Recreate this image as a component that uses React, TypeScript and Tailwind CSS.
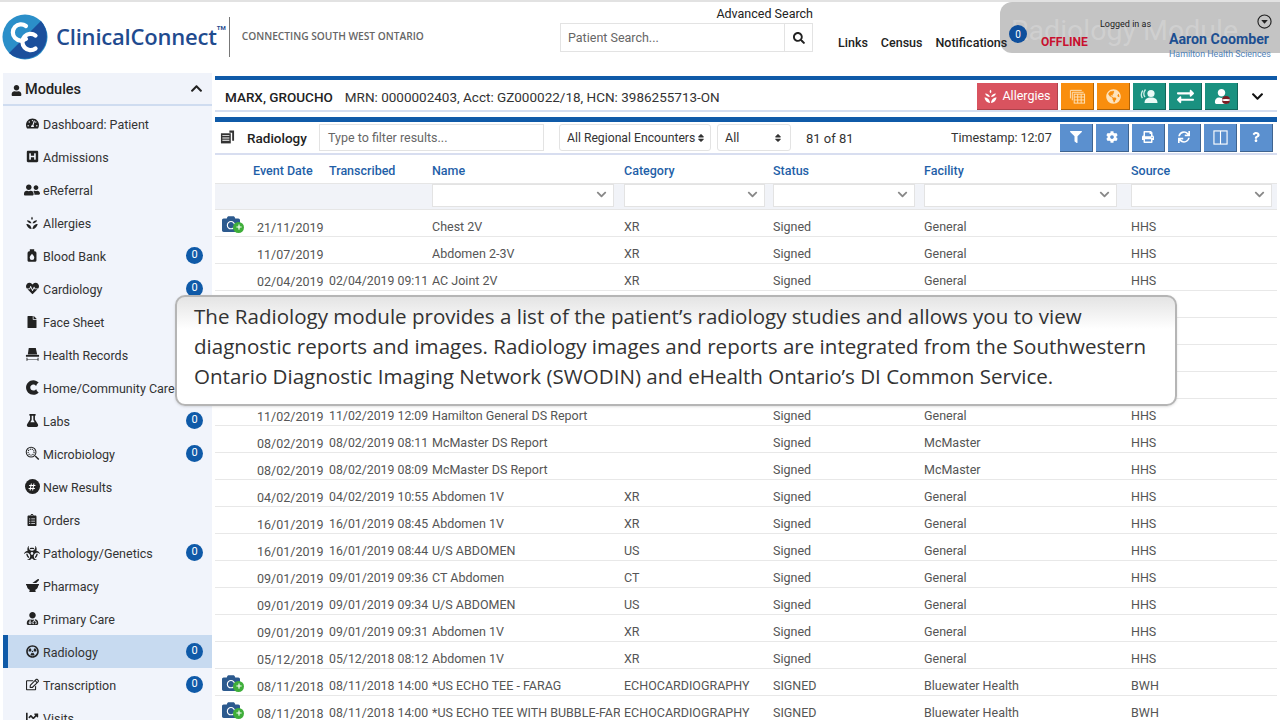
import type { ReactNode } from 'react'
import {
  FaCamera,
  FaChartLine,
  FaChevronDown,
  FaChevronUp,
  FaClipboardList,
  FaCog,
  FaCuttlefish,
  FaExchangeAlt,
  FaFile,
  FaFilter,
  FaFlask,
  FaGlobeAmericas,
  FaHSquare,
  FaHashtag,
  FaHeartbeat,
  FaMortarPestle,
  FaPlus,
  FaPrint,
  FaQuestion,
  FaRadiationAlt,
  FaRegEdit,
  FaSearch,
  FaSort,
  FaSync,
  FaTachometerAlt,
  FaUser,
  FaUserFriends,
  FaUserMd,
  FaBiohazard,
} from 'react-icons/fa'

function AllergyIcon({ className }: { className?: string }) {
  return (
    <svg viewBox="0 0 16 16" fill="currentColor" className={className ?? 'h-[14px] w-[14px]'}>
      <path d="M8 .8c1.2 1 1.2 2.7 0 3.7C6.8 3.5 6.8 1.8 8 .8Z" />
      <path d="M2.2 4.8c2.6 0 4.6 1.3 5.2 3.6C4.9 8.4 3 7.2 2.2 4.8Z" />
      <path d="M13.8 4.8c-2.6 0-4.6 1.3-5.2 3.6 2.5 0 4.4-1.2 5.2-3.6Z" />
      <path d="M1.5 9c3 0 5.4 1.6 6 5.8C4.5 14.6 2.3 12.5 1.5 9Z" />
      <path d="M14.5 9c-3 0-5.4 1.6-6 5.8 3-.2 5.2-2.3 6-5.8Z" />
    </svg>
  )
}

function BloodBagIcon() {
  return (
    <svg viewBox="0 0 16 16" className="h-[15px] w-[14px]" fill="currentColor">
      <path d="M5.5.8h5v2.4h.6a2 2 0 0 1 2 2v8.6a1.2 1.2 0 0 1-1.2 1.2H4.1a1.2 1.2 0 0 1-1.2-1.2V5.2a2 2 0 0 1 2-2h.6Z" />
      <path d="M8 6c1.6 2 2.6 3.1 2.6 4.5a2.6 2.6 0 0 1-5.2 0C5.4 9.1 6.4 8 8 6Z" fill="#f1f4fb" />
    </svg>
  )
}

function RecordsIcon() {
  return (
    <svg viewBox="0 0 16 16" className="h-[15px] w-[15px]" fill="currentColor">
      <path d="M4 1h7.5l1.5 7H3Z" />
      <path d="M1 8.4h14v2H1Z" />
      <path d="M1.6 11.4h1v3.2h-1ZM13.4 11.4h1v3.2h-1ZM1.6 13.2h12.8v.7H1.6Z" />
    </svg>
  )
}

function MicrobeIcon() {
  return (
    <svg viewBox="0 0 16 16" className="h-[15px] w-[15px]" fill="currentColor">
      <circle cx="6.5" cy="6.5" r="5.2" fill="none" stroke="currentColor" strokeWidth="1.1" />
      <circle cx="6.5" cy="6.5" r="3.2" fill="none" stroke="currentColor" strokeWidth="1.2" strokeDasharray="1.2 1" />
      <path d="m10.4 11.2 1-1 3.8 3.7-1.1 1.1Z" />
    </svg>
  )
}

function StackIcon() {
  return (
    <svg viewBox="0 0 16 16" className="h-[15px] w-[15px] text-[#333]" fill="currentColor">
      <path d="M10 .5h5v11h-2V3h-3Z" />
      <path d="M1 3.5h10.5v10.8H1Z" />
      <path d="M2.5 5.5H10v1H2.5ZM2.5 8H10v1H2.5ZM2.5 10.5H10v1H2.5Z" fill="#fff" />
    </svg>
  )
}

function LayeredTableIcon() {
  return (
    <svg viewBox="0 0 18 18" className="h-[17px] w-[17px]" fill="none" stroke="#fde3bd" strokeWidth="1">
      <path d="M1.5 11V2.5h12" />
      <path d="M3.5 13V4.5h12" />
      <rect x="5.5" y="6.5" width="11" height="9.5" />
      <path d="M5.5 9.5h11M5.5 12.7h11M9.2 6.5V16M12.9 6.5V16" />
    </svg>
  )
}

function UserEchoIcon() {
  return (
    <svg viewBox="0 0 18 18" className="h-[18px] w-[18px]" fill="#eafaf6">
      <circle cx="11" cy="6.5" r="3.6" />
      <path d="M4.5 16c0-4 2.6-5.6 6.5-5.6s6.5 1.6 6.5 5.6Z" />
      <path d="M5.5 2.5C3.5 5 3.5 8 5 10M2.8 3.5C1 6 1 9 2.4 11.2" fill="none" stroke="#cdeee6" strokeWidth="1.3" />
    </svg>
  )
}

function ColumnsIcon() {
  return (
    <svg viewBox="0 0 16 16" className="h-[15px] w-[15px]" fill="none" stroke="#fff" strokeWidth="1.2">
      <rect x="1" y="1" width="14" height="14" />
      <path d="M8 1v14" />
    </svg>
  )
}

type Module = { name: string; icon: ReactNode; badge?: boolean; active?: boolean }

const modules: Module[] = [
  { name: 'Dashboard: Patient', icon: <FaTachometerAlt /> },
  { name: 'Admissions', icon: <FaHSquare /> },
  { name: 'eReferral', icon: <FaUserFriends className="text-[16px]" /> },
  { name: 'Allergies', icon: <AllergyIcon /> },
  { name: 'Blood Bank', icon: <BloodBagIcon />, badge: true },
  { name: 'Cardiology', icon: <FaHeartbeat />, badge: true },
  { name: 'Face Sheet', icon: <FaFile className="text-[12px]" /> },
  { name: 'Health Records', icon: <RecordsIcon /> },
  { name: 'Home/Community Care', icon: <FaCuttlefish className="text-[15px]" /> },
  { name: 'Labs', icon: <FaFlask />, badge: true },
  { name: 'Microbiology', icon: <MicrobeIcon />, badge: true },
  {
    name: 'New Results',
    icon: (
      <span className="flex h-[15px] w-[15px] items-center justify-center rounded-full bg-[#222] text-[8px] text-white">
        <FaHashtag />
      </span>
    ),
  },
  { name: 'Orders', icon: <FaClipboardList className="text-[12px]" /> },
  { name: 'Pathology/Genetics', icon: <FaBiohazard className="text-[16px]" />, badge: true },
  { name: 'Pharmacy', icon: <FaMortarPestle /> },
  { name: 'Primary Care', icon: <FaUserMd /> },
  { name: 'Radiology', icon: <FaRadiationAlt />, badge: true, active: true },
  { name: 'Transcription', icon: <FaRegEdit />, badge: true },
  { name: 'Visits', icon: <FaChartLine /> },
]

type Row = {
  camera?: boolean
  date?: string
  transcribed?: string
  name?: string
  category?: string
  status?: string
  facility?: string
  source?: string
}

const rows: Row[] = [
  { camera: true, date: '21/11/2019', name: 'Chest 2V', category: 'XR', status: 'Signed', facility: 'General', source: 'HHS' },
  { date: '11/07/2019', name: 'Abdomen 2-3V', category: 'XR', status: 'Signed', facility: 'General', source: 'HHS' },
  { date: '02/04/2019', transcribed: '02/04/2019 09:11', name: 'AC Joint 2V', category: 'XR', status: 'Signed', facility: 'General', source: 'HHS' },
  {},
  {},
  {},
  {},
  { date: '11/02/2019', transcribed: '11/02/2019 12:09', name: 'Hamilton General DS Report', status: 'Signed', facility: 'General', source: 'HHS' },
  { date: '08/02/2019', transcribed: '08/02/2019 08:11', name: 'McMaster DS Report', status: 'Signed', facility: 'McMaster', source: 'HHS' },
  { date: '08/02/2019', transcribed: '08/02/2019 08:09', name: 'McMaster DS Report', status: 'Signed', facility: 'McMaster', source: 'HHS' },
  { date: '04/02/2019', transcribed: '04/02/2019 10:55', name: 'Abdomen 1V', category: 'XR', status: 'Signed', facility: 'General', source: 'HHS' },
  { date: '16/01/2019', transcribed: '16/01/2019 08:45', name: 'Abdomen 1V', category: 'XR', status: 'Signed', facility: 'General', source: 'HHS' },
  { date: '16/01/2019', transcribed: '16/01/2019 08:44', name: 'U/S ABDOMEN', category: 'US', status: 'Signed', facility: 'General', source: 'HHS' },
  { date: '09/01/2019', transcribed: '09/01/2019 09:36', name: 'CT Abdomen', category: 'CT', status: 'Signed', facility: 'General', source: 'HHS' },
  { date: '09/01/2019', transcribed: '09/01/2019 09:34', name: 'U/S ABDOMEN', category: 'US', status: 'Signed', facility: 'General', source: 'HHS' },
  { date: '09/01/2019', transcribed: '09/01/2019 09:31', name: 'Abdomen 1V', category: 'XR', status: 'Signed', facility: 'General', source: 'HHS' },
  { date: '05/12/2018', transcribed: '05/12/2018 08:12', name: 'Abdomen 1V', category: 'XR', status: 'Signed', facility: 'General', source: 'HHS' },
  { camera: true, date: '08/11/2018', transcribed: '08/11/2018 14:00', name: '*US ECHO TEE - FARAG', category: 'ECHOCARDIOGRAPHY', status: 'SIGNED', facility: 'Bluewater Health', source: 'BWH' },
  { camera: true, date: '08/11/2018', transcribed: '08/11/2018 14:00', name: '*US ECHO TEE WITH BUBBLE-FARAG', category: 'ECHOCARDIOGRAPHY', status: 'SIGNED', facility: 'Bluewater Health', source: 'BWH' },
]

const gridCols = 'grid grid-cols-[42px_72px_103px_192px_149px_151px_207px_1fr]'

function Badge() {
  return (
    <span className="flex h-[17px] w-[17px] items-center justify-center rounded-full bg-[#0f5aa8] text-[11px] text-white">
      0
    </span>
  )
}

function Logo() {
  return (
    <svg viewBox="0 0 48 48" className="h-[46px] w-[46px] shrink-0">
      <circle cx="24" cy="24" r="23.5" fill="#2b8fc9" />
      <path d="M40.6 7.4A23.5 23.5 0 0 1 7.4 40.6Z" fill="#1b4f9c" />
      <path d="M25 12.5a8.5 8.5 0 1 0 0 13.5" fill="none" stroke="#fff" strokeWidth="4.4" strokeLinecap="round" />
      <path d="M35 22.5a8.5 8.5 0 1 0 0 13.5" fill="none" stroke="#fff" strokeWidth="4.4" strokeLinecap="round" />
    </svg>
  )
}

function FilterSelect({ width }: { width: string }) {
  return (
    <div className={`${width} flex h-[23px] items-center justify-end border border-[#e3e3e3] bg-white pr-1.5 pb-[3px] text-[11px] text-[#888]`}>
      <FaChevronDown />
    </div>
  )
}

function CameraIcon() {
  return (
    <span className="relative block h-[18px] w-[22px] text-[18px] text-[#2c5a8e]">
      <FaCamera />
      <span className="absolute right-0 bottom-0 flex h-[11px] w-[11px] items-center justify-center rounded-full bg-[#3fae3a] text-[6px] text-white">
        <FaPlus />
      </span>
    </span>
  )
}

function ActionButton({ color, tall, children }: { color: string; tall?: boolean; children: ReactNode }) {
  return (
    <button className={`${color} ${tall ? 'h-[28px]' : 'h-[27px]'} relative flex w-[33px] items-center justify-center border-r border-b border-black/30 text-[15px] text-white`}>
      {children}
    </button>
  )
}

export default function App() {
  return (
    <div className="relative h-[720px] w-[1280px] overflow-hidden border-t-2 border-[#e2e2e2] bg-white font-['Roboto',sans-serif] text-[#333]">
      <header className="flex h-[71px] items-start">
        <div className="flex w-[560px] items-center pt-3 pl-[2px]">
          <Logo />
          <span className="-mt-[3px] ml-[8px] font-['Open_Sans',sans-serif] text-[22px] leading-none font-semibold tracking-[-0.2px] text-[#1f4b8f]">
            ClinicalConnect
          </span>
          <sup className="-mt-3 mr-[3px] text-[6px] font-bold text-[#1f4b8f]">TM</sup>
          <span className="h-[40px] border-l border-[#777]" />
          <span className="-mt-[1px] ml-[12px] font-['Open_Sans',sans-serif] text-[10.2px] font-semibold whitespace-nowrap text-[#666]">
            CONNECTING SOUTH WEST ONTARIO
          </span>
        </div>
        <div className="w-[253px] pt-[3px]">
          <div className="h-[18px] text-right text-[12.5px] leading-[17px] text-[#222]">Advanced Search</div>
          <div className="flex h-[29px] items-center border border-[#e3e3e3]">
            <span className="flex-1 pt-[1px] pl-[7px] text-[12.5px] text-[#666]">Patient Search...</span>
            <span className="flex h-full w-[28px] items-center justify-center border-l border-[#e3e3e3] text-[12px] text-[#222]">
              <FaSearch />
            </span>
          </div>
        </div>
        <nav className="relative z-10 ml-[25px] flex gap-[13px] pt-[32px] text-[12.5px] font-medium text-[#222]">
          <span>Links</span>
          <span>Census</span>
          <span>Notifications</span>
        </nav>
      </header>

      <div className="flex h-[647px]">
        <aside className="h-full w-[215px] shrink-0 overflow-hidden">
          <div className="ml-[3px] flex h-[33px] w-[209px] items-center justify-between border-b-2 border-[#cfdcf0] bg-[#f0f3fa] pr-[9px] pl-[8px]">
            <span className="flex items-center gap-[3px] pt-[3px] text-[14.5px] font-medium text-[#222]">
              <FaUser className="text-[11px]" />
              Modules
            </span>
            <FaChevronUp className="text-[13px] text-[#222]" />
          </div>
          <ul className="ml-[3px] h-full w-[209px] bg-[#f1f4fb] pt-[1px]">
            {modules.map((m) => (
              <li
                key={m.name}
                className={`flex h-[33px] items-center whitespace-nowrap text-[12.5px] text-[#333] ${
                  m.active ? 'border-l-[5px] border-[#0f5aa8] bg-[#c7daf0] pl-[16px]' : 'pl-[21px]'
                }`}
              >
                <span className="flex w-[19px] shrink-0 justify-center pr-[3px] text-[13px] text-[#222]">{m.icon}</span>
                <span className="flex-1 pt-[4px]">{m.name}</span>
                {m.badge && (
                  <span className="pr-[9px]">
                    <Badge />
                  </span>
                )}
              </li>
            ))}
          </ul>
        </aside>

        <main className="w-[1062px] shrink-0">
          <section className="mt-[3px] flex h-[36px] items-center border-t-4 border-b-2 border-t-[#0f5aa8] border-b-[#d5def0] pt-[3px] pr-[13px] pl-[10px]">
            <span className="pt-[1px] text-[13.5px] font-medium text-[#222]">MARX, GROUCHO</span>
            <span className="ml-[12px] flex-1 pt-[1px] text-[13.5px] text-[#333]">
              MRN: 0000002403, Acct: GZ000022/18, HCN: 3986255713-ON
            </span>
            <div className="flex gap-[3px]">
              <button className="flex h-[27px] w-[81px] items-center justify-center gap-[4px] border-r border-b border-black/20 bg-[#d9535f] pt-[1px] text-[12.5px] text-white">
                <AllergyIcon className="h-[15px] w-[15px]" />
                Allergies
              </button>
              <ActionButton color="bg-[#f98e0e]"><LayeredTableIcon /></ActionButton>
              <ActionButton color="bg-[#f98e0e]"><FaGlobeAmericas className="text-[#fde3bd]" /></ActionButton>
              <ActionButton color="bg-[#1a9180]"><UserEchoIcon /></ActionButton>
              <ActionButton color="bg-[#1a9180]"><FaExchangeAlt className="text-[17px]" /></ActionButton>
              <ActionButton color="bg-[#1a9180]">
                <FaUser className="text-[15px]" />
                <span className="absolute right-[7px] bottom-[5px] h-[8px] w-[8px] rounded-full border-y-[3px] border-[#7a1f24] bg-white" />
              </ActionButton>
            </div>
            <FaChevronDown className="ml-[13px] text-[13px] text-[#111]" />
          </section>

          <section className="mt-[5px] flex h-[38px] items-center border-t-[5px] border-b-2 border-t-[#0f5aa8] border-b-[#d8def0] pr-[3px] pl-[5px]">
            <StackIcon />
            <span className="ml-[12px] w-[72px] pt-[1px] text-[13.5px] font-medium text-[#222]">Radiology</span>
            <div className="flex h-[27px] w-[225px] items-center border border-[#e3e3e3] pt-[2px] pl-[8px] text-[12.5px] text-[#666]">
              Type to filter results...
            </div>
            <div className="ml-[15px] flex h-[27px] w-[152px] items-center justify-between rounded-[3px] border border-[#e3e3e3] pt-[1px] pr-[4px] pl-[7px] text-[12.2px] whitespace-nowrap text-[#333]">
              All Regional Encounters
              <FaSort className="text-[10px]" />
            </div>
            <div className="ml-[6px] flex h-[27px] w-[74px] items-center justify-between rounded-[3px] border border-[#e3e3e3] px-[7px] pt-[1px] text-[12.5px] text-[#333]">
              All
              <FaSort className="text-[10px]" />
            </div>
            <span className="ml-[15px] w-[145px] pt-[2px] text-[13px] text-[#333]">81 of 81</span>
            <span className="w-[102px] pt-[2px] text-[12.5px] text-[#333]">Timestamp: 12:07</span>
            <div className="ml-[7px] flex gap-[3px]">
              <ActionButton tall color="bg-[#5b90cf]"><FaFilter className="text-[12px]" /></ActionButton>
              <ActionButton tall color="bg-[#5b90cf]"><FaCog className="text-[12px]" /></ActionButton>
              <ActionButton tall color="bg-[#5b90cf]"><FaPrint className="text-[12px]" /></ActionButton>
              <ActionButton tall color="bg-[#5b90cf]"><FaSync className="text-[12px]" /></ActionButton>
              <ActionButton tall color="bg-[#5b90cf]"><ColumnsIcon /></ActionButton>
              <ActionButton tall color="bg-[#5b90cf]"><FaQuestion className="text-[10px]" /></ActionButton>
            </div>
          </section>

          <div className={`${gridCols} h-[28px] items-center pt-[4px] text-[12.5px] font-medium text-[#1f5fa8]`}>
            <span />
            <span className="-ml-[4px]">Event Date</span>
            <span>Transcribed</span>
            <span>Name</span>
            <span>Category</span>
            <span>Status</span>
            <span>Facility</span>
            <span>Source</span>
          </div>
          <div className={`${gridCols} h-[27px] items-start border-t border-b border-[#e6e6e6] bg-[#f1f3f8]`}>
            <span />
            <span />
            <span />
            <FilterSelect width="w-[182px]" />
            <FilterSelect width="w-[141px]" />
            <FilterSelect width="w-[142px]" />
            <FilterSelect width="w-[193px]" />
            <FilterSelect width="w-[141px]" />
          </div>
          {rows.map((r, i) => (
            <div key={i} className={`${gridCols} h-[27px] items-center border-b border-[#e8e8e8] text-[12.5px] whitespace-nowrap text-[#555]`}>
              <span className="pl-[7px]">{r.camera && <CameraIcon />}</span>
              <span className="pt-[9px]">{r.date}</span>
              <span className="overflow-hidden pt-[7px] text-[12.3px]">{r.transcribed}</span>
              <span className="w-[188px] overflow-hidden pt-[7px]">{r.name}</span>
              <span className="pt-[7px]">{r.category}</span>
              <span className="pt-[7px]">{r.status}</span>
              <span className="pt-[7px]">{r.facility}</span>
              <span className="pt-[7px]">{r.source}</span>
            </div>
          ))}
        </main>
      </div>

      <div className="absolute top-0 right-0 h-[51px] w-[280px] overflow-visible rounded-l-[12px] bg-[#c4c4c4]">
        <span className="absolute top-[8px] left-[11px] text-[28.5px] whitespace-nowrap text-white/20">Radiology Module</span>
        <span className="absolute top-[23px] left-[9px] flex h-[18px] w-[18px] items-center justify-center rounded-full bg-[#0f4f9c] text-[10px] text-white">0</span>
        <span className="absolute top-[31px] left-[41px] text-[12px] font-bold text-[#c8102e]">OFFLINE</span>
        <span className="absolute top-[16px] left-[100px] text-[9px] text-[#222]">Logged in as</span>
        <svg viewBox="0 0 16 16" className="absolute top-[12px] left-[257px] h-[15px] w-[15px]">
          <circle cx="8" cy="8" r="7" fill="none" stroke="#222" strokeWidth="1.2" />
          <path d="M4.5 6.5h7L8 10.5Z" fill="#222" />
        </svg>
        <span className="absolute top-[27px] left-[169px] text-[14.2px] font-bold whitespace-nowrap text-[#1d4f91]">Aaron Coomber</span>
        <span className="absolute top-[46px] left-[169px] text-[8.9px] whitespace-nowrap text-[#4f7fb5]">Hamilton Health Sciences</span>
      </div>

      <div className="absolute top-[293px] left-[175px] h-[111px] w-[1002px] rounded-[10px] border-2 border-[#b5b5b5] bg-gradient-to-b from-[#e4e4e4] via-white via-30% to-white px-[17px] py-[4px] font-['Open_Sans',sans-serif] text-[20.55px] leading-[30px] whitespace-nowrap text-[#333] shadow-sm">
        The Radiology module provides a list of the patient’s radiology studies and allows you to view
        <br />
        diagnostic reports and images. Radiology images and reports are integrated from the Southwestern
        <br />
        Ontario Diagnostic Imaging Network (SWODIN) and eHealth Ontario’s DI Common Service.
      </div>
    </div>
  )
}
